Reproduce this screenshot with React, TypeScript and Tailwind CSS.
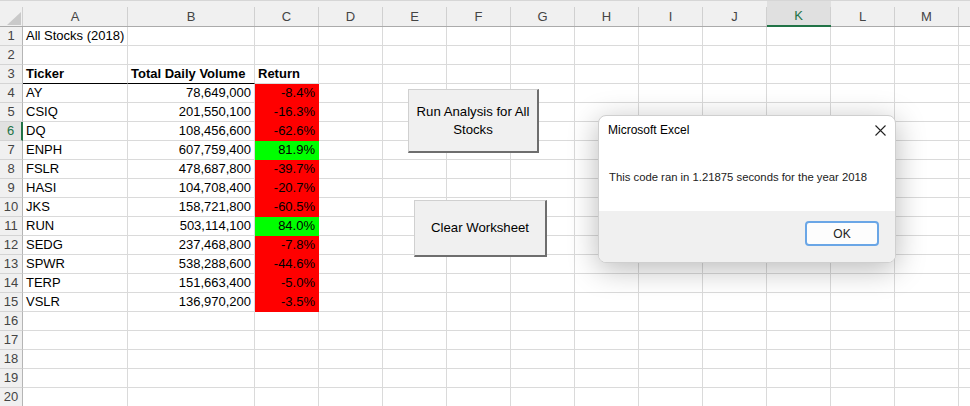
import React from "react";

const cols = [
  { l: "A", w: "w-[105px]" },
  { l: "B", w: "w-[127px]" },
  { l: "C", w: "w-[64px]" },
  { l: "D", w: "w-[64px]" },
  { l: "E", w: "w-[64px]" },
  { l: "F", w: "w-[64px]" },
  { l: "G", w: "w-[64px]" },
  { l: "H", w: "w-[64px]" },
  { l: "I", w: "w-[64px]" },
  { l: "J", w: "w-[64px]" },
  { l: "K", w: "w-[64px]" },
  { l: "L", w: "w-[64px]" },
  { l: "M", w: "w-[64px]" },
  { l: "", w: "w-[64px]" },
];

const stocks = [
  ["AY", "78,649,000", "-8.4%"],
  ["CSIQ", "201,550,100", "-16.3%"],
  ["DQ", "108,456,600", "-62.6%"],
  ["ENPH", "607,759,400", "81.9%"],
  ["FSLR", "478,687,800", "-39.7%"],
  ["HASI", "104,708,400", "-20.7%"],
  ["JKS", "158,721,800", "-60.5%"],
  ["RUN", "503,114,100", "84.0%"],
  ["SEDG", "237,468,800", "-7.8%"],
  ["SPWR", "538,288,600", "-44.6%"],
  ["TERP", "151,663,400", "-5.0%"],
  ["VSLR", "136,970,200", "-3.5%"],
];

type CellProps = {
  w: string;
  children?: React.ReactNode;
  right?: boolean;
  bold?: boolean;
  fill?: "red" | "green";
  underline?: boolean;
};

const Cell = ({ w, children, right, bold, fill, underline }: CellProps) => {
  let cls = "border-[#dadada]";
  if (fill === "red") cls = "bg-[#ff0000] border-[#ff0000]";
  if (fill === "green") cls = "bg-[#00ff00] border-[#00ff00]";
  return (
    <div
      className={`${w} shrink-0 h-[19px] border-r border-b ${cls} ${
        underline ? "border-b-black" : ""
      } px-[3px] flex items-center overflow-hidden whitespace-nowrap text-[13px] text-black ${
        right ? "justify-end" : ""
      } ${bold ? "font-bold" : ""}`}
    >
      {children}
    </div>
  );
};

const RowHead = ({ n }: { n: number }) => (
  <div
    className={`w-[23px] shrink-0 h-[19px] border-b border-b-[#d4d4d4] flex items-center justify-center text-[13px] ${
      n === 6
        ? "bg-[#e1e1e1] text-[#217346] border-r-2 border-r-[#217346]"
        : "bg-[#f0f0f0] text-[#444] border-r border-r-[#b5b5b5]"
    }`}
  >
    {n}
  </div>
);

export default function App() {
  const rows = Array.from({ length: 20 }, (_, i) => i + 1);

  const renderRow = (n: number) => {
    const cells: React.ReactNode[] = cols.map((c, ci) => {
      if (n === 1 && ci === 0)
        return (
          <Cell key={ci} w={c.w}>
            All Stocks (2018)
          </Cell>
        );
      if (n === 3 && ci === 0)
        return (
          <Cell key={ci} w={c.w} bold underline>
            Ticker
          </Cell>
        );
      if (n === 3 && ci === 1)
        return (
          <Cell key={ci} w={c.w} bold underline>
            Total Daily Volume
          </Cell>
        );
      if (n === 3 && ci === 2)
        return (
          <Cell key={ci} w={c.w} bold>
            Return
          </Cell>
        );
      if (n >= 4 && n <= 15 && ci < 3) {
        const s = stocks[n - 4];
        if (ci === 0)
          return (
            <Cell key={ci} w={c.w}>
              {s[0]}
            </Cell>
          );
        if (ci === 1)
          return (
            <Cell key={ci} w={c.w} right>
              {s[1]}
            </Cell>
          );
        return (
          <Cell key={ci} w={c.w} right fill={s[2].startsWith("-") ? "red" : "green"}>
            {s[2]}
          </Cell>
        );
      }
      return <Cell key={ci} w={c.w} />;
    });
    return (
      <div key={n} className="flex">
        <RowHead n={n} />
        {cells}
      </div>
    );
  };

  return (
    <div
      className="relative w-[970px] h-[406px] overflow-hidden bg-white"
      style={{ fontFamily: '"Liberation Sans", Arial, sans-serif' }}
    >
      {/* column headers */}
      <div className="flex h-[27px] border-t border-[#d6d6d6] bg-[#f0f0f0]">
        <div className="w-[23px] shrink-0 h-[26px] border-b border-[#ababab] pt-[6px]">
          <div className="h-full border-r border-[#d0d0d0] flex items-end justify-end pr-[1px] pb-[1px]">
            <svg width="14" height="13" viewBox="0 0 14 13">
              <polygon points="14,0 14,13 0,13" fill="#c9c9c9" />
            </svg>
          </div>
        </div>
        {cols.map((c, i) => (
          <div
            key={i}
            className={`${c.w} shrink-0 h-[26px] ${
              c.l === "K"
                ? "bg-[#e0e0e0] border-b-2 border-[#217346] text-[#217346]"
                : "border-b border-[#ababab] text-[#444]"
            } pt-[6px]`}
          >
            <div className="h-full border-r border-[#d0d0d0] flex items-center justify-center text-[13px]">
              {c.l}
            </div>
          </div>
        ))}
      </div>

      {rows.map(renderRow)}

      {/* form buttons */}
      <button className="absolute left-[408px] top-[89px] w-[131px] h-[64px] bg-[#f0f0f0] border border-[#d0d0d0] border-r-2 border-b-2 border-r-[#6e6e6e] border-b-[#6e6e6e] text-[13.2px] leading-[18px] text-black">
        Run Analysis for All
        <br />
        Stocks
      </button>
      <button className="absolute left-[414px] top-[200px] w-[133px] h-[57px] bg-[#f0f0f0] border border-[#d0d0d0] border-r-2 border-b-2 border-r-[#6e6e6e] border-b-[#6e6e6e] text-[13.2px] text-black">
        Clear Worksheet
      </button>

      {/* message box */}
      <div className="absolute left-[598px] top-[115px] w-[298px] h-[148px] bg-white rounded-[8px] border border-[#cfcfcf] shadow-[0_6px_30px_rgba(0,0,0,0.28)] flex flex-col overflow-hidden">
        <div className="h-[28px] shrink-0 flex items-center justify-between pl-[9px] pr-[9px] text-[12px] text-black">
          <span>Microsoft Excel</span>
          <svg width="11" height="11" viewBox="0 0 11 11">
            <path d="M0.5 0.5 L10.5 10.5 M10.5 0.5 L0.5 10.5" stroke="#222" strokeWidth="1.1" />
          </svg>
        </div>
        <div className="flex-1 flex items-center pl-[10px] text-[11.3px] text-[#222]">
          This code ran in 1.21875 seconds for the year 2018
        </div>
        <div className="h-[51px] shrink-0 bg-[#f0f0f0] flex justify-end items-start pt-[10px] pr-[16px]">
          <button className="w-[74px] h-[25px] rounded-[4px] border-2 border-[#6aa6e6] bg-[#fdfdfd] text-[12px] text-[#222]">
            OK
          </button>
        </div>
      </div>
    </div>
  );
}
